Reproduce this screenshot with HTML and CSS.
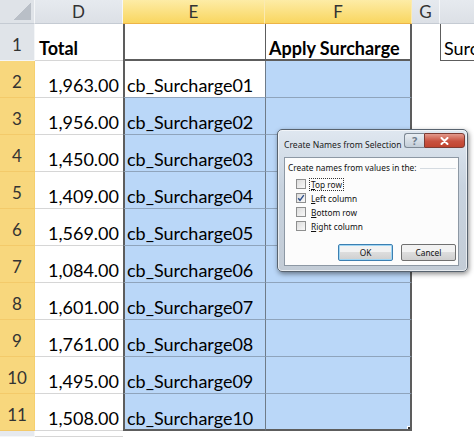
FILE: index.html
```html
<!DOCTYPE html>
<html>
<head>
<meta charset="utf-8">
<link rel="stylesheet" href="styles.css">
</head>
<body>
<div class="sheet">
  <div class="corner"></div>
  <div class="ch">D</div>
  <div class="ch csel">E</div>
  <div class="ch csel">F</div>
  <div class="ch">G</div>
  <div class="ch last"></div>

  <div class="rh">1</div>
  <div class="c d b">Total</div>
  <div class="c e top"></div>
  <div class="c f top b">Apply Surcharge</div>
  <div class="c g"></div>
  <div class="c h hbox">Surcharge</div>

  <div class="rh rsel">2</div>
  <div class="c d num">1,963.00</div>
  <div class="c e active">cb_Surcharge01</div>
  <div class="c f"></div>
  <div class="c g"></div>
  <div class="c h"></div>

  <div class="rh rsel">3</div>
  <div class="c d num">1,956.00</div>
  <div class="c e">cb_Surcharge02</div>
  <div class="c f"></div>
  <div class="c g"></div>
  <div class="c h"></div>

  <div class="rh rsel">4</div>
  <div class="c d num">1,450.00</div>
  <div class="c e">cb_Surcharge03</div>
  <div class="c f"></div>
  <div class="c g"></div>
  <div class="c h"></div>

  <div class="rh rsel">5</div>
  <div class="c d num">1,409.00</div>
  <div class="c e">cb_Surcharge04</div>
  <div class="c f"></div>
  <div class="c g"></div>
  <div class="c h"></div>

  <div class="rh rsel">6</div>
  <div class="c d num">1,569.00</div>
  <div class="c e">cb_Surcharge05</div>
  <div class="c f"></div>
  <div class="c g"></div>
  <div class="c h"></div>

  <div class="rh rsel">7</div>
  <div class="c d num">1,084.00</div>
  <div class="c e">cb_Surcharge06</div>
  <div class="c f"></div>
  <div class="c g"></div>
  <div class="c h"></div>

  <div class="rh rsel">8</div>
  <div class="c d num">1,601.00</div>
  <div class="c e">cb_Surcharge07</div>
  <div class="c f"></div>
  <div class="c g"></div>
  <div class="c h"></div>

  <div class="rh rsel">9</div>
  <div class="c d num">1,761.00</div>
  <div class="c e">cb_Surcharge08</div>
  <div class="c f"></div>
  <div class="c g"></div>
  <div class="c h"></div>

  <div class="rh rsel">10</div>
  <div class="c d num">1,495.00</div>
  <div class="c e">cb_Surcharge09</div>
  <div class="c f"></div>
  <div class="c g"></div>
  <div class="c h"></div>

  <div class="rh rsel">11</div>
  <div class="c d num">1,508.00</div>
  <div class="c e bottom">cb_Surcharge10</div>
  <div class="c f bottom"><span class="handle"></span></div>
  <div class="c g"></div>
  <div class="c h"></div>

  <div class="rh next"></div>
  <div class="c d"></div>
  <div class="c plain"></div>
  <div class="c plain"></div>
  <div class="c g"></div>
  <div class="c h"></div>

  <div class="dlg">
    <div class="titlebar">
      <span class="title">Create Names from Selection</span>
      <div class="caps">
        <span class="help">?</span>
        <span class="close">
          <svg width="9" height="8" viewBox="0 0 9 8"><path d="M1.5 1 L7.5 7 M7.5 1 L1.5 7" stroke="#fff" stroke-width="2" stroke-linecap="round"/></svg>
        </span>
      </div>
    </div>
    <div class="panel">
      <div class="legend"><span>Create names from values in the:</span><span class="rule"></span></div>
      <div class="opts">
        <div class="opt"><span class="box"></span><span class="lbl focus"><u>T</u>op row</span></div>
        <div class="opt"><span class="box"><svg width="8" height="8" viewBox="0 0 8 8"><path d="M1.2 4.2 L3 6.3 L6.8 1.2" fill="none" stroke="#2d4e8a" stroke-width="1.4"/></svg></span><span class="lbl"><u>L</u>eft column</span></div>
        <div class="opt"><span class="box"></span><span class="lbl"><u>B</u>ottom row</span></div>
        <div class="opt"><span class="box"></span><span class="lbl"><u>R</u>ight column</span></div>
      </div>
      <div class="btns">
        <span class="btn default">OK</span>
        <span class="btn">Cancel</span>
      </div>
    </div>
  </div>
</div>
</body>
</html>
```

FILE: styles.css
```css
html, body {
  margin: 0;
  padding: 0;
  background: #fff;
}

.sheet {
  position: relative;
  width: 474px;
  height: 437px;
  overflow: hidden;
  display: grid;
  grid-template-columns: 35px 88px 142px 147px 28px 1fr;
  grid-template-rows: 24px repeat(11, 37px) 1fr;
  font-family: "Lato", "Open Sans", sans-serif;
  font-size: 18px;
  color: #000;
}

.corner {
  background: #dfe3e8 linear-gradient(135deg, transparent 50%, #b9bfc7 50%) no-repeat right 3px bottom 3px / 17px 17px;
  border-right: 1px solid #f4f6f8;
  border-bottom: 1px solid #c5cbd3;
  box-sizing: border-box;
}

.ch {
  box-sizing: border-box;
  background: linear-gradient(#e6eaef, #dce0e6);
  border-right: 1px solid #f5f7f9;
  border-bottom: 1px solid #c5cbd3;
  display: flex;
  align-items: center;
  justify-content: center;
  color: #333;
  font-size: 17px;
  line-height: 1;
}

.ch.csel {
  background: linear-gradient(#fdeca6, #f9d660);
  border-bottom: 1px solid #edb447;
  border-right: 1px solid #fbeab0;
}

.ch.last {
  border-right: none;
}

.rh {
  box-sizing: border-box;
  background: #e0e4e9;
  border-bottom: 1px solid #f4f6f8;
  border-right: 1px solid #f4f6f8;
  display: flex;
  align-items: center;
  justify-content: center;
  color: #333;
  font-size: 17px;
  line-height: 1;
  padding-top: 5px;
}

.rh.rsel {
  background: #f8d77d;
  border-bottom: 1px solid #f3ca6a;
  border-right: 1px solid #f6d06e;
}

.rh.next {
  background: #e6e9ee;
}

.c {
  box-sizing: border-box;
  display: flex;
  align-items: flex-end;
  line-height: 20px;
  padding: 0 4px 2px 4px;
  white-space: nowrap;
  overflow: hidden;
}

.c.d {
  border-bottom: 1px solid #d6d6d6;
}

.c.num {
  justify-content: flex-end;
}

.c.b {
  font-weight: 700;
}

.c.e {
  border-left: 2px solid #5d5d5d;
  padding-left: 2px;
  background: #bad7f8;
  border-bottom: 1px solid #8fa4bc;
}

.c.f {
  position: relative;
  background: #bad7f8;
  border-left: 1px solid #6f7b88;
  border-right: 2px solid #5d5d5d;
  border-bottom: 1px solid #8fa4bc;
}

.c.top {
  background: #fff;
  border-bottom: 2px solid #5d5d5d;
  padding-bottom: 1px;
}

.c.f.top {
  border-left: 1px solid #5d5d5d;
  padding-left: 3px;
}

.c.active {
  background: #fff;
}

.c.bottom {
  border-bottom: 2px solid #5d5d5d;
  padding-bottom: 1px;
}

.handle {
  position: absolute;
  right: -4px;
  bottom: -4px;
  width: 5px;
  height: 5px;
  background: #333;
  border: 1px solid #fff;
}

.c.hbox {
  border-left: 1px solid #5d5d5d;
  border-bottom: 1px solid #5d5d5d;
  padding-left: 3px;
}

/* Dialog */
.dlg {
  position: absolute;
  left: 277px;
  top: 129px;
  width: 191px;
  height: 143px;
  box-sizing: border-box;
  border: 1px solid #58636f;
  border-radius: 5px;
  background: linear-gradient(#dfe7f0, #c8d3df 40%, #c3ccd6);
  box-shadow: 1px 2px 5px rgba(0,0,0,0.45), inset 0 0 0 1px rgba(255,255,255,0.6);
  padding: 0 8px 5px 6px;
  display: flex;
  flex-direction: column;
  font-family: "Noto Sans", "Open Sans", sans-serif;
  font-size: 8.3px;
  color: #111;
}

.titlebar {
  height: 27px;
  display: flex;
  justify-content: space-between;
  align-items: flex-start;
}

.title {
  margin-top: 10px;
  font-size: 8.6px;
  line-height: 11px;
  white-space: nowrap;
  color: #1b1b1b;
}

.caps {
  display: flex;
  flex-shrink: 0;
  margin-top: 3px;
  margin-right: -6px;
}

.help {
  width: 20px;
  height: 15px;
  box-sizing: border-box;
  border: 1px solid #7d8894;
  border-right: none;
  border-radius: 3px 0 0 3px;
  background: linear-gradient(#e9eef3, #c3cdd8);
  color: #6f7c8c;
  font-size: 11px;
  font-weight: 700;
  display: flex;
  align-items: center;
  justify-content: center;
  line-height: 1;
}

.close {
  width: 41px;
  height: 15px;
  box-sizing: border-box;
  border: 1px solid #7d3b33;
  border-radius: 0 3px 3px 0;
  background: linear-gradient(#e3998c, #c8513f 55%, #c0442f);
  display: flex;
  align-items: center;
  justify-content: center;
}

.panel {
  flex: 1;
  box-sizing: border-box;
  border: 1px solid #8d98a4;
  background: #fcfcfc;
  padding: 4px 2px 4px 3px;
  display: flex;
  flex-direction: column;
}

.legend {
  display: flex;
  align-items: center;
  line-height: 12px;
  white-space: nowrap;
}

.rule {
  flex: 1;
  height: 1px;
  background: #d5dbe1;
  margin-left: 4px;
  margin-top: 1px;
}

.opts {
  margin-top: 3px;
  padding-left: 8px;
  display: flex;
  flex-direction: column;
}

.opt {
  height: 14px;
  display: flex;
  align-items: center;
}

.box {
  width: 10px;
  height: 10px;
  box-sizing: border-box;
  border: 1px solid #8e8f8f;
  background: linear-gradient(135deg, #dcdcdc, #f8f8f8);
  display: flex;
  align-items: center;
  justify-content: center;
  margin-right: 3px;
}

.lbl {
  padding: 0 1px;
  line-height: 11px;
  border: 1px solid transparent;
}

.lbl.focus {
  border: 1px dotted #333;
}

.btns {
  margin-top: auto;
  display: flex;
  justify-content: flex-end;
  gap: 8px;
}

.btn {
  width: 55px;
  height: 17px;
  box-sizing: border-box;
  border: 1px solid #707070;
  border-radius: 2px;
  background: linear-gradient(#f2f2f2 45%, #dddddd 50%, #cfcfcf);
  display: flex;
  align-items: center;
  justify-content: center;
  color: #111;
}

.btn.default {
  border-color: #3c7fb1;
  box-shadow: inset 0 0 0 1px #9fd5f3;
}
```
